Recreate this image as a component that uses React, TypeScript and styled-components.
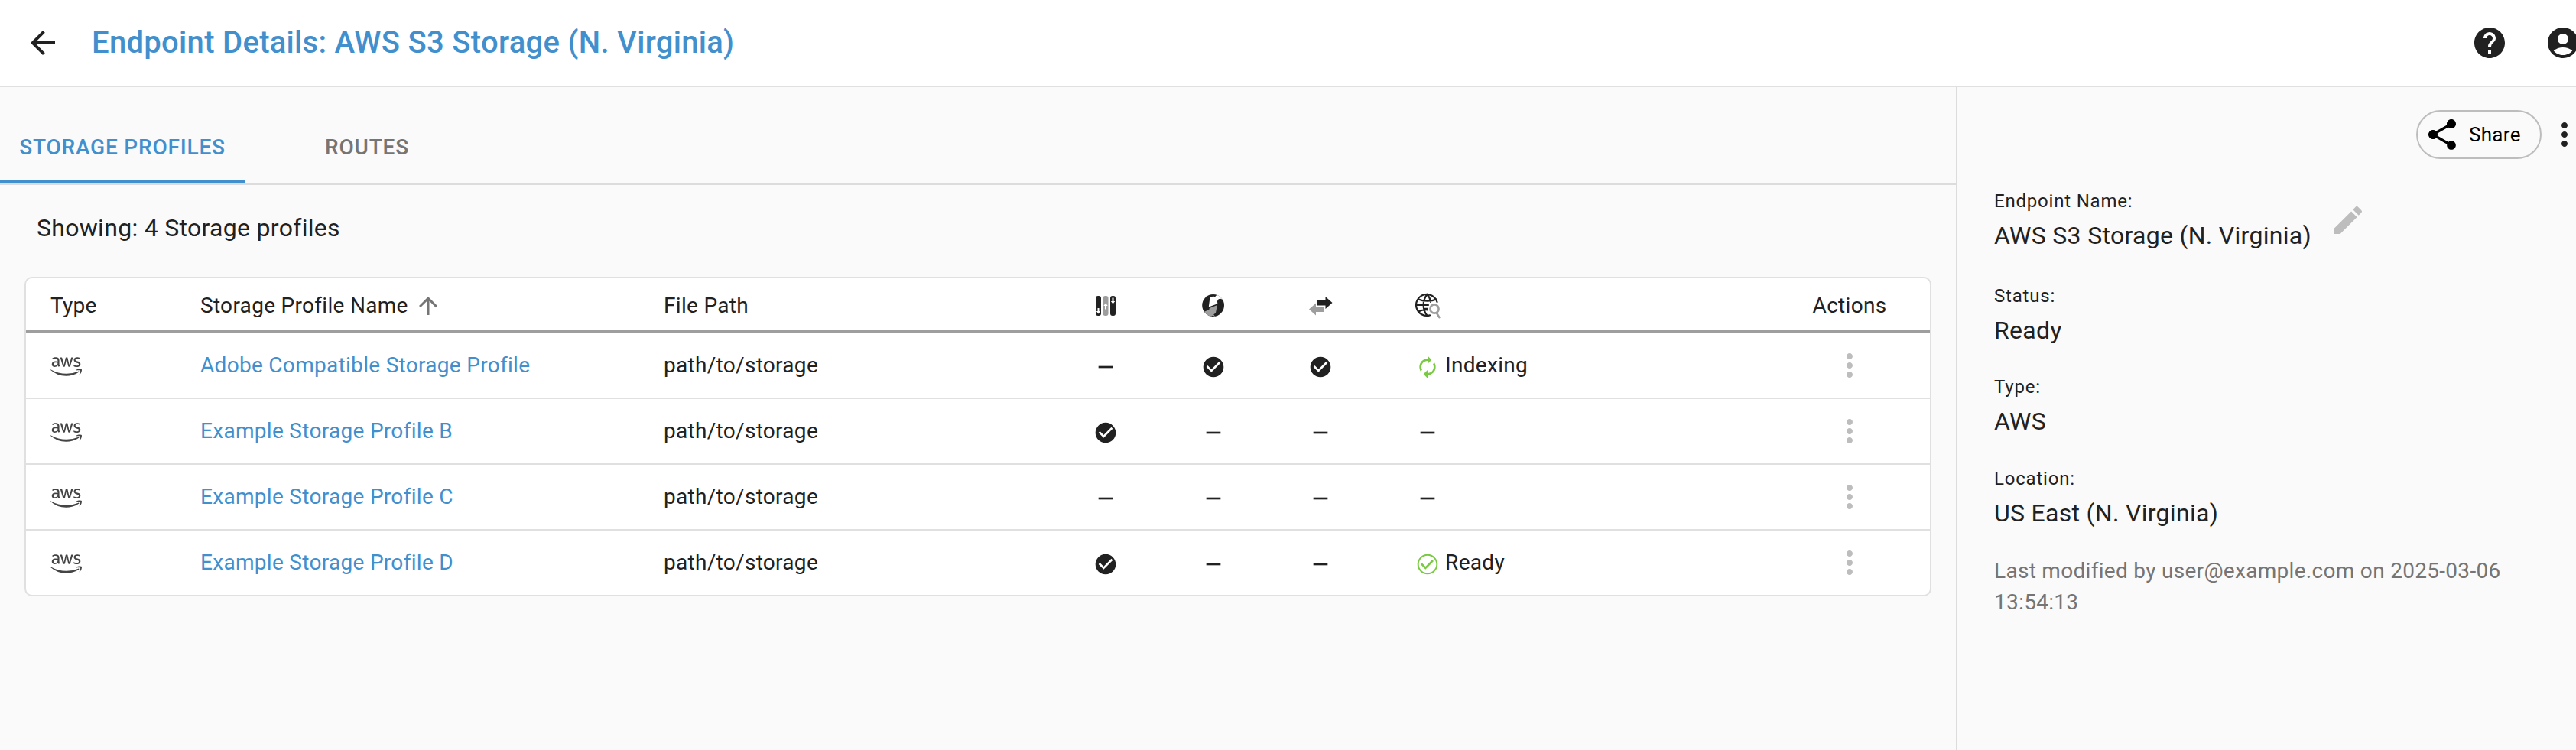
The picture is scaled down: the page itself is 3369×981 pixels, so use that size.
import React from "react";
import styled, { createGlobalStyle } from "styled-components";
import {
  MdArrowBack,
  MdHelp,
  MdAccountCircle,
  MdShare,
  MdMoreVert,
  MdEdit,
  MdArrowUpward,
  MdCheckCircle,
  MdRemove,
  MdAutorenew,
} from "react-icons/md";
import { FaAws } from "react-icons/fa";

const colors = {
  text: "#212121",
  muted: "#757575",
  link: "#428fcd",
  line: "#e0e0e0",
  disabled: "#bdbdbd",
  green: "#7ac943",
};

const GlobalStyle = createGlobalStyle`
  *, *::before, *::after { box-sizing: border-box; }
  body {
    margin: 0;
    overflow: hidden;
    background: #fafafa;
    color: ${colors.text};
    font-family: Roboto, "Liberation Sans", sans-serif;
    -webkit-font-smoothing: antialiased;
  }
  svg { display: block; flex: none; }
`;

const Page = styled.div`
  display: flex;
  flex-direction: column;
  height: 981px;
  overflow: hidden;
`;

const Header = styled.header`
  display: flex;
  align-items: center;
  height: 114px;
  flex: none;
  padding-left: 32px;
  background: #fff;
  border-bottom: 2px solid ${colors.line};
`;

const Title = styled.h1`
  margin: 0 auto 0 40px;
  padding-bottom: 1px;
  font-size: 40px;
  line-height: 64px;
  font-weight: 500;
  letter-spacing: 0.3px;
  color: ${colors.link};
  white-space: nowrap;
`;

const HeaderActions = styled.div`
  display: flex;
  gap: 48px;
  width: 137px;
  flex: none;
`;

const Body = styled.div`
  display: flex;
  flex: 1;
`;

const Main = styled.main`
  flex: 1;
`;

const Tabs = styled.nav`
  display: flex;
  height: 128px;
  border-bottom: 2px solid #dcdcdc;
`;

const Tab = styled.button<{ $active?: boolean }>`
  width: 320px;
  padding: 35px 0 0;
  border: 0;
  border-bottom: 4px solid ${(p) => (p.$active ? colors.link : "transparent")};
  background: none;
  font: 500 28px/35px Roboto, sans-serif;
  letter-spacing: 0.8px;
  text-align: center;
  color: ${(p) => (p.$active ? colors.link : colors.muted)};
`;

const Summary = styled.p`
  margin: 0;
  padding: 32px 48px 0;
  height: 120px;
  font-size: 32px;
  line-height: 48px;
  letter-spacing: 0.3px;
`;

const Table = styled.section`
  margin: 0 32px;
  background: #fff;
  border: 2px solid ${colors.line};
  border-radius: 10px;
`;

const Row = styled.div<{ $head?: boolean }>`
  display: grid;
  grid-template-columns: 196px 606px 562.2px 140.8px 139.8px 140.3px 1fr 179px;
  align-items: center;
  height: ${(p) => (p.$head ? 72 : 86)}px;
  padding-left: 32px;
  padding-top: ${(p) => (p.$head ? 4 : 0)}px;
  border-bottom: ${(p) => (p.$head ? "4px solid #9e9e9e" : `2px solid ${colors.line}`)};
  font-size: 28px;
  line-height: 40px;
  letter-spacing: 0.3px;
  &:last-child {
    height: 84px;
    border-bottom: 0;
  }
`;

const Cell = styled.div<{ $low?: boolean }>`
  display: flex;
  align-items: center;
  white-space: nowrap;
  padding-top: ${(p) => (p.$low ? 4 : 0)}px;
`;

const ActionCell = styled(Cell)`
  width: 148px;
  justify-content: center;
  color: ${colors.disabled};
`;

const ActionHead = styled(ActionCell)`
  color: ${colors.text};
`;

const NameLink = styled.a`
  color: ${colors.link};
`;

const SortIcon = styled(MdArrowUpward)`
  margin-left: 8px;
  color: ${colors.muted};
`;

const AwsMark = styled(FaAws)`
  width: 41px;
  height: 33px;
  margin-top: 3px;
  color: #444;
`;

const StatusText = styled.span`
  margin: -4px 0 0 7px;
`;

const Panel = styled.aside`
  width: 811px;
  flex: none;
  padding-top: 30px;
  border-left: 2px solid #dcdcdc;
`;

const PanelActions = styled.div`
  display: flex;
  align-items: center;
  justify-content: flex-end;
  gap: 6px;
  height: 64px;
  margin-right: -9px;
`;

const ShareButton = styled.button`
  display: flex;
  align-items: center;
  gap: 11px;
  width: 164px;
  height: 64px;
  padding: 0 0 0 8px;
  border: 2px solid ${colors.disabled};
  border-radius: 32px;
  background: none;
  color: #000;
  font: 400 26px/40px Roboto, sans-serif;
  letter-spacing: 0.3px;
`;

const Details = styled.dl`
  display: flex;
  flex-direction: column;
  gap: 29.7px;
  margin: 0;
  padding: 35px 0 0 48px;
`;

const Field = styled.div<{ $editable?: boolean }>`
  display: flex;
  align-items: flex-start;
  gap: 24px;
  height: ${(p) => (p.$editable ? 94 : 90)}px;
`;

const Label = styled.dt`
  font-size: 24px;
  line-height: 40px;
  letter-spacing: 0.8px;
`;

const Value = styled.dd`
  margin: 1px 0 0;
  font-size: 32px;
  line-height: 48px;
  letter-spacing: 0.3px;
`;

const EditIcon = styled(MdEdit)`
  margin-top: 21px;
  color: ${colors.disabled};
`;

const Modified = styled.p`
  margin: 0;
  padding: 30px 48px 0;
  font-size: 28px;
  line-height: 41px;
  letter-spacing: 0.3px;
  color: ${colors.muted};
`;

const LanesIcon = () => (
  <svg width="32" height="32" viewBox="0 0 32 32">
    <rect x="3" y="3" width="7" height="26" rx="3" fill="#212121" />
    <rect x="12.5" y="3" width="7" height="26" rx="3" fill="#9e9e9e" />
    <rect x="22" y="3" width="7" height="26" rx="3" fill="#212121" />
    <path d="M5.5 19h2v4h1.700l-2.700 3.500-2.700-3.500h1.700zM15 20.500h2V16h1.700L16 12.500 13.300 16H15zM24.500 5.500h2V10h1.700l-2.700 3.500-2.700-3.500h1.700z" fill="#fff" />
  </svg>
);

const SphereIcon = () => (
  <svg width="32" height="32" viewBox="0 0 32 32">
    <clipPath id="disc">
      <circle cx="15.6" cy="15.500" r="14.4" />
    </clipPath>
    <g clipPath="url(#disc)">
      <rect width="32" height="32" fill="#212121" />
      <path d="M11.600 4L9.800 17.500 21.300 13.200 21 10.500C21 8.200 22.800 6.600 25.200 6.700L31 9V0H22L18 4.200 15.500 3.600 13.500 4.600z" fill="#fff" />
      <path d="M10.800 18.900L21 15 18.900 25.400 16.200 27.200 18.800 31H8L2 24.400 7.500 22.300 10.200 21.600z" fill="#9e9e9e" />
      <path d="M13 30l2.200-1.600 2.600 2z" fill="#212121" />
    </g>
  </svg>
);

const TransferIcon = () => (
  <svg width="32" height="32" viewBox="0 0 32 32">
    <path d="M12 8.500h10.500V4l9 8-9 8v-4.500H12z" fill="#212121" />
    <path d="M20.500 17.500v6.500H10v4.500L1 20.500l9-8v5z" fill="#9e9e9e" />
  </svg>
);

const GlobeSearchIcon = () => (
  <svg width="34" height="34" viewBox="0 0 34 34" fill="none" strokeWidth="2.2" strokeLinecap="round">
    <g stroke="#212121">
      <path d="M28.500 12A14 14 0 1 0 19 29.400M15.500 2c-6.500 8.500-6.500 19.500 0 28M11 16h6M1.500 16h11M4 8.500c6.500 2.800 17 2.800 23.500 0M4 24.500c4-1.800 8-2.400 12-2.200M11.500 20.800h4.500M15.500 2c2.600 3 4.200 6.800 4.500 10" />
    </g>
    <g stroke="#9e9e9e" strokeWidth="2.600">
      <circle cx="25" cy="21" r="5.600" />
      <path d="M28 26.500l3.400 5.600" />
    </g>
  </svg>
);

type Index = "indexing" | "ready" | null;

interface Profile {
  name: string;
  path: string;
  flags: [boolean, boolean, boolean];
  index: Index;
}

const profiles: Profile[] = [
  { name: "Adobe Compatible Storage Profile", path: "path/to/storage", flags: [false, true, true], index: "indexing" },
  { name: "Example Storage Profile B", path: "path/to/storage", flags: [true, false, false], index: null },
  { name: "Example Storage Profile C", path: "path/to/storage", flags: [false, false, false], index: null },
  { name: "Example Storage Profile D", path: "path/to/storage", flags: [true, false, false], index: "ready" },
];

const CheckOutline = () => (
  <svg width="32" height="32" viewBox="0 0 24 24" fill={colors.green}>
    <path d="M16.590 7.580L10 14.170l-3.590-3.580L5 12l5 5 8-8zM12 2C6.480 2 2 6.480 2 12s4.480 10 10 10 10-4.480 10-10S17.520 2 12 2zm0 18.500c-4.700 0-8.500-3.800-8.500-8.500S7.300 3.500 12 3.500s8.500 3.800 8.500 8.500-3.800 8.500-8.500 8.500z" />
  </svg>
);

const IndexStatus = ({ value }: { value: Index }) => {
  if (value === "indexing")
    return (
      <>
        <MdAutorenew size={32} color={colors.green} />
        <StatusText>Indexing</StatusText>
      </>
    );
  if (value === "ready")
    return (
      <>
        <CheckOutline />
        <StatusText>Ready</StatusText>
      </>
    );
  return <MdRemove size={32} />;
};

const fields = [
  { label: "Endpoint Name:", value: "AWS S3 Storage (N. Virginia)", editable: true },
  { label: "Status:", value: "Ready" },
  { label: "Type:", value: "AWS" },
  { label: "Location:", value: "US East (N. Virginia)" },
];

export default function App() {
  return (
    <Page>
      <GlobalStyle />
      <Header>
        <MdArrowBack size={48} />
        <Title>Endpoint Details: AWS S3 Storage (N. Virginia)</Title>
        <HeaderActions>
          <MdHelp size={48} />
          <MdAccountCircle size={48} />
        </HeaderActions>
      </Header>
      <Body>
        <Main>
          <Tabs>
            <Tab $active>STORAGE PROFILES</Tab>
            <Tab>ROUTES</Tab>
          </Tabs>
          <Summary>Showing: 4 Storage profiles</Summary>
          <Table>
            <Row $head>
              <Cell>Type</Cell>
              <Cell>
                Storage Profile Name
                <SortIcon size={36} />
              </Cell>
              <Cell>File Path</Cell>
              <Cell><LanesIcon /></Cell>
              <Cell><SphereIcon /></Cell>
              <Cell><TransferIcon /></Cell>
              <Cell><GlobeSearchIcon /></Cell>
              <ActionHead>Actions</ActionHead>
            </Row>
            {profiles.map((p) => (
              <Row key={p.name}>
                <Cell><AwsMark /></Cell>
                <Cell><NameLink>{p.name}</NameLink></Cell>
                <Cell>{p.path}</Cell>
                {p.flags.map((on, i) => (
                  <Cell key={i} $low>{on ? <MdCheckCircle size={32} /> : <MdRemove size={32} />}</Cell>
                ))}
                <Cell $low><IndexStatus value={p.index} /></Cell>
                <ActionCell><MdMoreVert size={48} /></ActionCell>
              </Row>
            ))}
          </Table>
        </Main>
        <Panel>
          <PanelActions>
            <ShareButton>
              <MdShare size={48} />
              Share
            </ShareButton>
            <MdMoreVert size={48} />
          </PanelActions>
          <Details>
            {fields.map((f) => (
              <Field key={f.label} $editable={f.editable}>
                <div>
                  <Label>{f.label}</Label>
                  <Value>{f.value}</Value>
                </div>
                {f.editable && <EditIcon size={48} />}
              </Field>
            ))}
          </Details>
          <Modified>Last modified by user@example.com on 2025-03-06 13:54:13</Modified>
        </Panel>
      </Body>
    </Page>
  );
}
